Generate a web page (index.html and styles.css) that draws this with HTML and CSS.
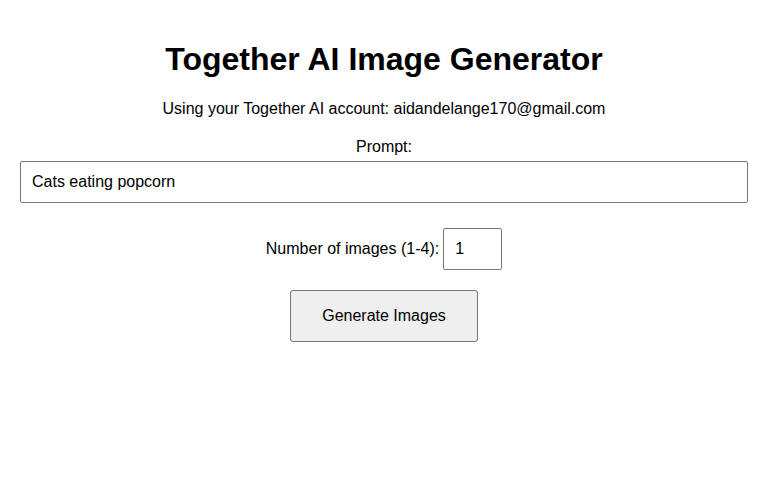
FILE: index.html
```html
<!DOCTYPE html>
<html lang="en">
<head>
<meta charset="utf-8">
<title>Together AI Image Generator</title>
<link rel="stylesheet" href="styles.css">
</head>
<body>
<main class="app">
  <h1 class="title">Together AI Image Generator</h1>
  <p class="account">Using your Together AI account: aidandelange170@gmail.com</p>
  <label class="prompt-label" for="prompt">Prompt:</label>
  <input class="prompt-input" id="prompt" type="text" value="Cats eating popcorn">
  <div class="count-row">
    <label class="count-label" for="count">Number of images (1-4):</label>
    <input class="count-input" id="count" type="number" min="1" max="4" value="1">
  </div>
  <button class="generate" type="button">Generate Images</button>
</main>
</body>
</html>
```

FILE: styles.css
```css
html, body {
  margin: 0;
  padding: 0;
  background: #ffffff;
}

body {
  font-family: "Liberation Sans", Arial, sans-serif;
  font-size: 16px;
  color: #000000;
}

.app {
  display: flex;
  flex-direction: column;
  align-items: center;
  padding: 41px 20px 20px;
  text-align: center;
}

.title {
  margin: 0;
  font-size: 32px;
  font-weight: bold;
  line-height: 37px;
}

.account {
  margin: 22px 0 0;
  line-height: 18px;
}

.prompt-label {
  margin-top: 20px;
  line-height: 18px;
}

.prompt-input {
  box-sizing: border-box;
  width: 100%;
  height: 42px;
  margin-top: 5px;
  padding: 0 11px;
  border: 1px solid #767676;
  border-radius: 2px;
  font-family: inherit;
  font-size: 16px;
  color: #000000;
  background: #ffffff;
}

.count-row {
  display: flex;
  align-items: center;
  gap: 4px;
  margin-top: 25px;
  height: 42px;
}

.count-label {
  line-height: 18px;
}

.count-input {
  box-sizing: border-box;
  width: 59px;
  height: 42px;
  padding: 0 11px;
  border: 1px solid #767676;
  border-radius: 2px;
  font-family: inherit;
  font-size: 16px;
  color: #000000;
  background: #ffffff;
  appearance: textfield;
  -moz-appearance: textfield;
}

.count-input::-webkit-outer-spin-button,
.count-input::-webkit-inner-spin-button {
  -webkit-appearance: none;
  margin: 0;
}

.generate {
  box-sizing: border-box;
  width: 188px;
  height: 52px;
  margin-top: 20px;
  border: 1px solid #767676;
  border-radius: 3px;
  background: #efefef;
  font-family: inherit;
  font-size: 16px;
  color: #000000;
}
```
